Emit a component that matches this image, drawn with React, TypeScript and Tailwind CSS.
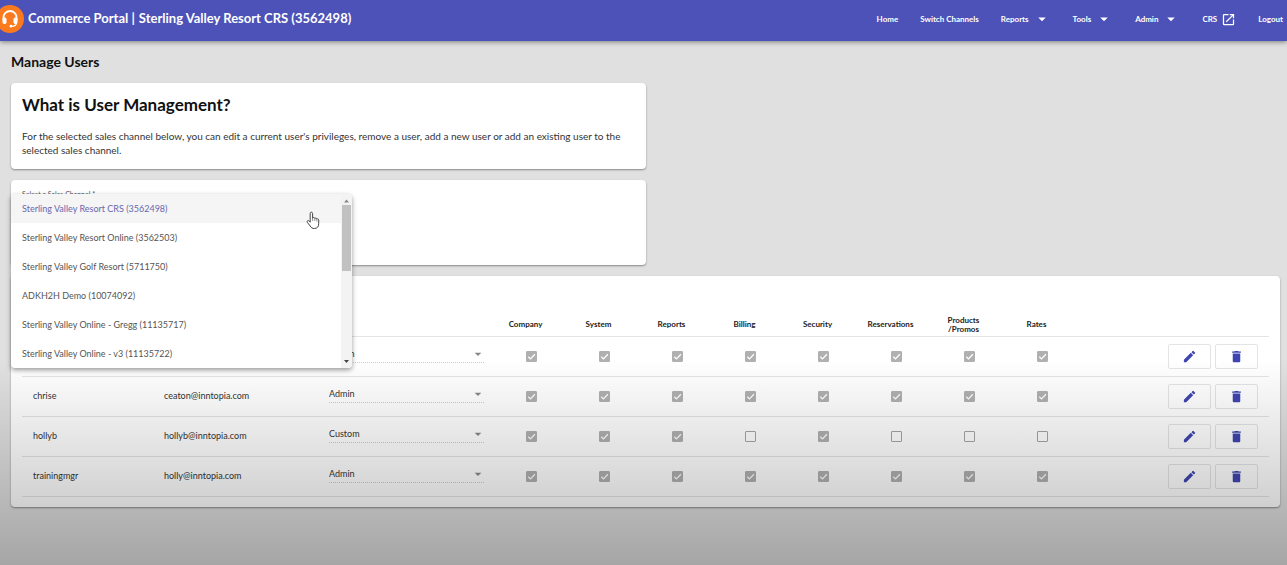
import React from 'react';
import { MdArrowDropDown, MdDelete, MdEdit, MdOpenInNew } from 'react-icons/md';

const navItems = [
  { label: 'Home' },
  { label: 'Switch Channels' },
  { label: 'Reports', menu: true },
  { label: 'Tools', menu: true },
  { label: 'Admin', menu: true },
  { label: 'CRS', external: true },
  { label: 'Logout' },
];

const channels = [
  'Sterling Valley Resort CRS (3562498)',
  'Sterling Valley Resort Online (3562503)',
  'Sterling Valley Golf Resort (5711750)',
  'ADKH2H Demo (10074092)',
  'Sterling Valley Online - Gregg (11135717)',
  'Sterling Valley Online - v3 (11135722)',
];

const privileges = ['Company', 'System', 'Reports', 'Billing', 'Security', 'Reservations', 'Products /Promos', 'Rates'];

const users = [
  { name: '', email: '', role: 'Admin', access: [1, 1, 1, 1, 1, 1, 1, 1] },
  { name: 'chrise', email: 'ceaton@inntopia.com', role: 'Admin', access: [1, 1, 1, 1, 1, 1, 1, 1] },
  { name: 'hollyb', email: 'hollyb@inntopia.com', role: 'Custom', access: [1, 1, 1, 0, 1, 0, 0, 0] },
  { name: 'trainingmgr', email: 'holly@inntopia.com', role: 'Admin', access: [1, 1, 1, 1, 1, 1, 1, 1] },
];

const Logo = () => (
  <svg className="-ml-1 size-7" viewBox="0 0 28 28">
    <circle cx="14" cy="14" r="14" fill="#fb7a1e" />
    <path d="M7.500 15V12.500a6.500 6.500 0 0 1 13 0V15" fill="none" stroke="#fff" strokeWidth="1.800" />
    <rect x="6.500" y="12.500" width="4" height="6.500" rx="1.700" fill="#fff" />
    <rect x="17.500" y="12.500" width="4" height="6.500" rx="1.700" fill="#fff" />
    <path d="M20.300 18c0 2.500-1.500 3.300-4.800 3.300" fill="none" stroke="#fff" strokeWidth="1.300" />
    <circle cx="15" cy="21.200" r="1.400" fill="#fff" />
  </svg>
);

const Header = () => (
  <header className="relative flex h-[41px] items-center justify-between bg-[#4c52b8] pr-1 pb-[3px] text-white shadow-[0_1px_5px_rgba(0,0,0,0.45)]">
    <div className="flex items-center">
      <Logo />
      <span className="ml-1 text-[13px] font-bold whitespace-nowrap">Commerce Portal |</span>
      <span className="ml-1 text-[13px] font-bold whitespace-nowrap">{channels[0]}</span>
    </div>
    <nav className="flex items-center gap-[22px] text-[8px] font-bold whitespace-nowrap">
      {navItems.map((item) => (
        <a key={item.label} href="#" className="flex items-center">
          {item.label}
          {item.menu && <MdArrowDropDown className="ml-1 size-[18px]" />}
          {item.external && <MdOpenInNew className="ml-1 size-[15px]" />}
        </a>
      ))}
    </nav>
  </header>
);

const Pointer = () => (
  <svg className="absolute top-[17px] left-[295px] h-[19px] w-[14px]" viewBox="0 0 14 19">
    <path
      d="M4.2 11.2V2.6c0-1.9 2.4-1.9 2.4 0v4.6c.3-1 2-.9 2.2.3.5-.8 1.9-.5 2 .6.7-.6 1.9-.2 1.9 1v3.6c0 2.900-1.500 4.800-4.200 4.800-2.300 0-3.400-.9-4.300-2.500L1.300 11.300c-.7-1.500.9-2.300 1.900-1.200z"
      fill="#fff"
      stroke="#444"
      strokeLinejoin="round"
    />
    <path d="M6.600 7v3M8.800 7.500V10M10.800 8.200V10.500" stroke="#666" strokeWidth="0.700" />
  </svg>
);

const ChannelMenu = () => (
  <div className="absolute top-[14px] left-0 z-20 flex w-[341px] overflow-hidden rounded-sm bg-white shadow-[0_2px_5px_rgba(0,0,0,0.4)]">
    <ul role="listbox" aria-label="Sales channels" className="flex-1 text-[9px] text-[#555]">
      {channels.map((channel, i) => (
        <li
          key={channel}
          role="option"
          aria-selected={i === 0}
          className={
            i === 0
              ? 'flex h-[29px] items-center bg-[#f5f5f6] px-[11px] text-[#6a67ad]'
              : 'flex h-[29px] items-center px-[11px]'
          }
        >
          {channel}
        </li>
      ))}
    </ul>
    <div className="flex w-[11px] flex-col items-center bg-[#f3f3f3] py-1">
      <svg className="h-[7px] w-[5px]" viewBox="0 0 5 7"><path d="M0 4.500L2.500 1.500L5 4.500z" fill="#888" /></svg>
      <div className="h-[66px] w-[9px] bg-[#c1c1c1]" />
      <svg className="mt-auto h-[5px] w-[5px]" viewBox="0 0 5 5"><path d="M0 1L2.500 4L5 1z" fill="#444" /></svg>
    </div>
    <Pointer />
  </div>
);

const Privilege = ({ label, checked }: { label: string; checked: boolean }) => (
  <span className="mx-auto grid size-[11px]">
    <input
      type="checkbox"
      aria-label={label}
      defaultChecked={checked}
      disabled
      className="peer col-start-1 row-start-1 size-[11px] appearance-none rounded-[1px] border border-[#a5a5a5] checked:border-[#b0b0b0] checked:bg-[#b0b0b0]"
    />
    <svg className="invisible col-start-1 row-start-1 size-[11px] peer-checked:visible" viewBox="0 0 11 11">
      <path d="M2.300 5.700L4.500 7.900L8.900 3.300" fill="none" stroke="#fff" strokeWidth="1.300" />
    </svg>
  </span>
);

const UserTable = () => (
  <table className="w-full table-fixed border-collapse text-left text-[9px] text-[#333]">
    <thead>
      <tr className="h-[30px] border-b border-[#e4e4e4] text-[8px] leading-[9px] text-[#222]">
        <th className="w-[131px]" aria-label="User name" />
        <th className="w-[166px]" aria-label="Email" />
        <th className="w-[176px]" aria-label="Role" />
        {privileges.map((privilege) => (
          <th key={privilege} className="w-[73px] pt-2 pr-4 pl-1 text-center font-bold">{privilege}</th>
        ))}
        <th aria-label="Actions" />
      </tr>
    </thead>
    <tbody>
      {users.map((user, row) => (
        <tr key={row} className="h-10 border-b border-[#e4e4e4]">
          <td className="pl-[11px]">{user.name}</td>
          <td className="pl-[11px]">{user.email}</td>
          <td className="pl-[10px]">
            <span className="mb-1 grid w-[155px] items-center border-b border-dotted border-[#ccc]">
              <select
                aria-label={`Role for ${user.name}`}
                defaultValue={user.role}
                disabled
                className="col-start-1 row-start-1 h-4 appearance-none opacity-100"
              >
                <option>Admin</option>
                <option>Custom</option>
              </select>
              <MdArrowDropDown className="pointer-events-none col-start-1 row-start-1 -mr-0.5 size-4 justify-self-end text-[#888]" />
            </span>
          </td>
          {user.access.map((value, i) => (
            <td key={privileges[i]}>
              <Privilege label={`${privileges[i]} for ${user.name}`} checked={value === 1} />
            </td>
          ))}
          <td className="pr-[11px]">
            <div className="flex justify-end gap-1 text-[#3f45b0]">
              <button aria-label={`Edit ${user.name}`} className="flex h-[25px] w-[43px] items-center justify-center rounded-[2px] border border-[#e4e4e4]">
                <MdEdit className="size-[15px]" />
              </button>
              <button aria-label={`Delete ${user.name}`} className="flex h-[25px] w-[43px] items-center justify-center rounded-[2px] border border-[#e4e4e4]">
                <MdDelete className="size-[15px]" />
              </button>
            </div>
          </td>
        </tr>
      ))}
    </tbody>
  </table>
);

const App = () => {
  return (
    <div className="relative min-h-screen bg-[#e0e0e0] font-['Lato','Liberation_Sans',sans-serif]">
      <Header />
      <main className="flex flex-col gap-[11px] pt-[11px] pr-[7px] pl-[11px]">
        <h1 className="text-[14px] leading-5 font-bold text-[#111]">Manage Users</h1>

        {/* Intro */}
        <section className="w-1/2 rounded-sm bg-white px-[11px] pt-3 pb-3 shadow-[0_1px_2px_rgba(0,0,0,0.4)]">
          <h2 className="text-[17px] leading-5 font-bold text-[#111]">What is User Management?</h2>
          <p className="mt-[14px] text-[10px] leading-[14px] text-[#333]">
            For the selected sales channel below, you can edit a current user's privileges, remove a user, add a new user or add an existing user to the selected sales channel.
          </p>
        </section>

        {/* Sales channel */}
        <section className="relative h-[85px] w-1/2 rounded-sm bg-white shadow-[0_1px_2px_rgba(0,0,0,0.4)]">
          <div className="flex flex-col items-start px-[11px] pt-[10px]">
            <label htmlFor="channel" className="text-[7px] leading-[9px] text-[#555]">Select a Sales Channel *</label>
            <select id="channel" className="h-5 w-[300px] appearance-none border-b border-[#bbb] text-[10px]">
              <option>{channels[0]}</option>
            </select>
          </div>
          <ChannelMenu />
        </section>

        {/* Users */}
        <section className="rounded-sm bg-white px-[11px] pt-[30px] pb-[10px] shadow-[0_1px_2px_rgba(0,0,0,0.4)]">
          <UserTable />
        </section>
      </main>
      <div className="pointer-events-none absolute inset-x-0 bottom-0 z-10 h-[205px] bg-linear-to-b from-transparent to-black/26" />
    </div>
  );
};

export default App;
